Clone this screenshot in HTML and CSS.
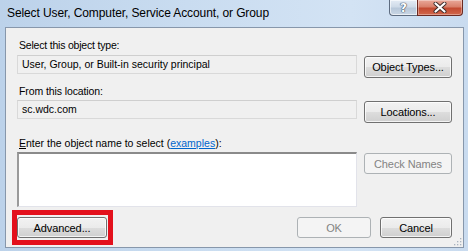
FILE: index.html
```html
<!DOCTYPE html>
<html>
<head>
<meta charset="utf-8">
<link rel="stylesheet" href="styles.css">
</head>
<body>
<div class="window">
  <div class="titlebar">
    <div class="title">Select User, Computer, Service Account, or Group</div>
    <div class="caption">
      <div class="cbtn help"><span>?</span></div>
      <div class="cbtn close">
        <svg width="14" height="11" viewBox="0 0 14 11"><path d="M2.5 1.5 L11.5 9.5 M11.5 1.5 L2.5 9.5" stroke="#3b2a28" stroke-width="4" stroke-linecap="round"/><path d="M2.5 1.5 L11.5 9.5 M11.5 1.5 L2.5 9.5" stroke="#ffffff" stroke-width="2.2" stroke-linecap="round"/></svg>
      </div>
    </div>
  </div>
  <div class="frame">
    <div class="panel">
      <div class="label l1">Select this object type:</div>
      <div class="row r1">
        <div class="field">User, Group, or Built-in security principal</div>
        <div class="btn">Object Types...</div>
      </div>
      <div class="label l2">From this location:</div>
      <div class="row r2">
        <div class="field">sc.wdc.com</div>
        <div class="btn">Locations...</div>
      </div>
      <div class="label l3"><u>E</u>nter the object name to select (<a class="link">examples</a>):</div>
      <div class="row r3">
        <div class="area"></div>
        <div class="btn disabled">Check Names</div>
      </div>
      <div class="bottom">
        <div class="mark"><div class="btn adv">Advanced...</div></div>
        <div class="spacer"></div>
        <div class="btn disabled ok">OK</div>
        <div class="btn cancel">Cancel</div>
      </div>
      <svg class="grip" width="9" height="9" viewBox="0 0 9 9" fill="#a9b3bf">
        <rect x="7" y="1" width="1.3" height="1.3"/>
        <rect x="4" y="4" width="1.3" height="1.3"/><rect x="7" y="4" width="1.3" height="1.3"/>
        <rect x="1" y="7" width="1.3" height="1.3"/><rect x="4" y="7" width="1.3" height="1.3"/><rect x="7" y="7" width="1.3" height="1.3"/>
      </svg>
    </div>
  </div>
</div>
</body>
</html>
```
FILE: styles.css
```css
html, body {
  margin: 0;
  padding: 0;
}
body {
  width: 468px;
  height: 251px;
  overflow: hidden;
  font-family: "Liberation Sans", Arial, sans-serif;
}
.window {
  width: 468px;
  height: 251px;
  display: flex;
  flex-direction: column;
  background: linear-gradient(to right, #bcd2ea 0%, #c9dcf0 40%, #d3e3f4 75%, #c9dbef 100%);
}
.titlebar {
  height: 27px;
  display: flex;
  align-items: flex-start;
  flex: none;
}
.title {
  font-size: 12px;
  color: #000;
  padding: 6px 0 0 7px;
  letter-spacing: -0.1px;
}
.caption {
  margin-left: auto;
  margin-right: 5px;
  display: flex;
}
.cbtn {
  height: 16px;
  display: flex;
  align-items: center;
  justify-content: center;
  box-sizing: border-box;
  border: 1px solid #5d6c80;
  border-top: none;
}
.help {
  width: 28px;
  border-right: none;
  border-radius: 0 0 0 4px;
  background: linear-gradient(#e4ecf5 0%, #cfdbe8 45%, #b8c8da 55%, #c9d6e4 100%);
  box-shadow: inset 0 0 0 1px rgba(255,255,255,0.6);
}
.help span {
  font-family: "DejaVu Sans", sans-serif;
  font-weight: bold;
  font-size: 12px;
  color: #fff;
  text-shadow: 0 0 1px #34465c, 0 0 1px #34465c, 0 0 1px #34465c;
  line-height: 14px;
}
.close {
  width: 46px;
  border-color: #6b2a22;
  border-radius: 0 0 4px 0;
  background: linear-gradient(#e9a899 0%, #d9806b 45%, #c34a31 55%, #d1684c 100%);
  box-shadow: inset 0 0 0 1px rgba(255,255,255,0.35);
}
.frame {
  flex: 1;
  min-height: 0;
  padding: 0 4px 3px 5px;
  display: flex;
}
.panel {
  position: relative;
  flex: 1;
  border: 1px solid #8797ab;
  background: #f0f0f0;
  padding: 0 11px 0 11px;
  display: flex;
  flex-direction: column;
  font-size: 10.5px;
  color: #000;
}
.label {
  height: 14px;
  line-height: 14px;
  padding-left: 2px;
}
.l1 { margin-top: 10px; letter-spacing: -0.2px; }
.l2 { margin-top: 6px; letter-spacing: -0.1px; }
.l3 { margin-top: 13px; }
.link {
  color: #0066cc;
  text-decoration: underline;
}
.row {
  display: flex;
  align-items: flex-start;
  gap: 7px;
}
.r1 { margin-top: 3px; }
.r2 { margin-top: 2px; }
.r3 { margin-top: 2px; }
.field {
  width: 340px;
  height: 19px;
  box-sizing: border-box;
  border: 1px solid #d9d9d9;
  border-top-color: #cfcfcf;
  background: #f0f0f0;
  padding-left: 4px;
  line-height: 17px;
}
.area {
  width: 340px;
  height: 55px;
  box-sizing: border-box;
  background: #fff;
  border: 1px solid #e2e3ea;
  border-top: 2px solid #8a8a8a;
  border-left: 2px solid #9a9a9a;
}
.btn {
  width: 88px;
  height: 22px;
  box-sizing: border-box;
  border: 1px solid #707070;
  border-radius: 3px;
  background: linear-gradient(#f2f2f2 0%, #ebebeb 50%, #dddddd 51%, #cfcfcf 100%);
  box-shadow: inset 0 0 0 1px rgba(255,255,255,0.75);
  display: flex;
  align-items: center;
  justify-content: center;
  color: #000;
  flex: none;
  font-size: 11px;
  letter-spacing: -0.1px;
}
.r1 .btn, .r2 .btn { margin-top: 1px; }
.r3 .btn { margin-top: 1px; height: 21px; }
.btn.disabled {
  border-color: #adb2b5;
  background: #f4f4f4;
  box-shadow: none;
  color: #838383;
}
.bottom {
  display: flex;
  align-items: flex-end;
  margin-top: 3px;
}
.mark {
  border: 5px solid #e3101c;
  margin-left: -5px;
  padding: 2px 1px 2px 0;
}
.btn.adv { width: 90px; height: 21px; }
.spacer { flex: 1; }
.ok { width: 74px; height: 21px; margin-bottom: 7px; }
.cancel { width: 72px; height: 21px; margin-left: 9px; margin-bottom: 7px; }
.grip {
  position: absolute;
  right: 1px;
  bottom: 1px;
}
```
